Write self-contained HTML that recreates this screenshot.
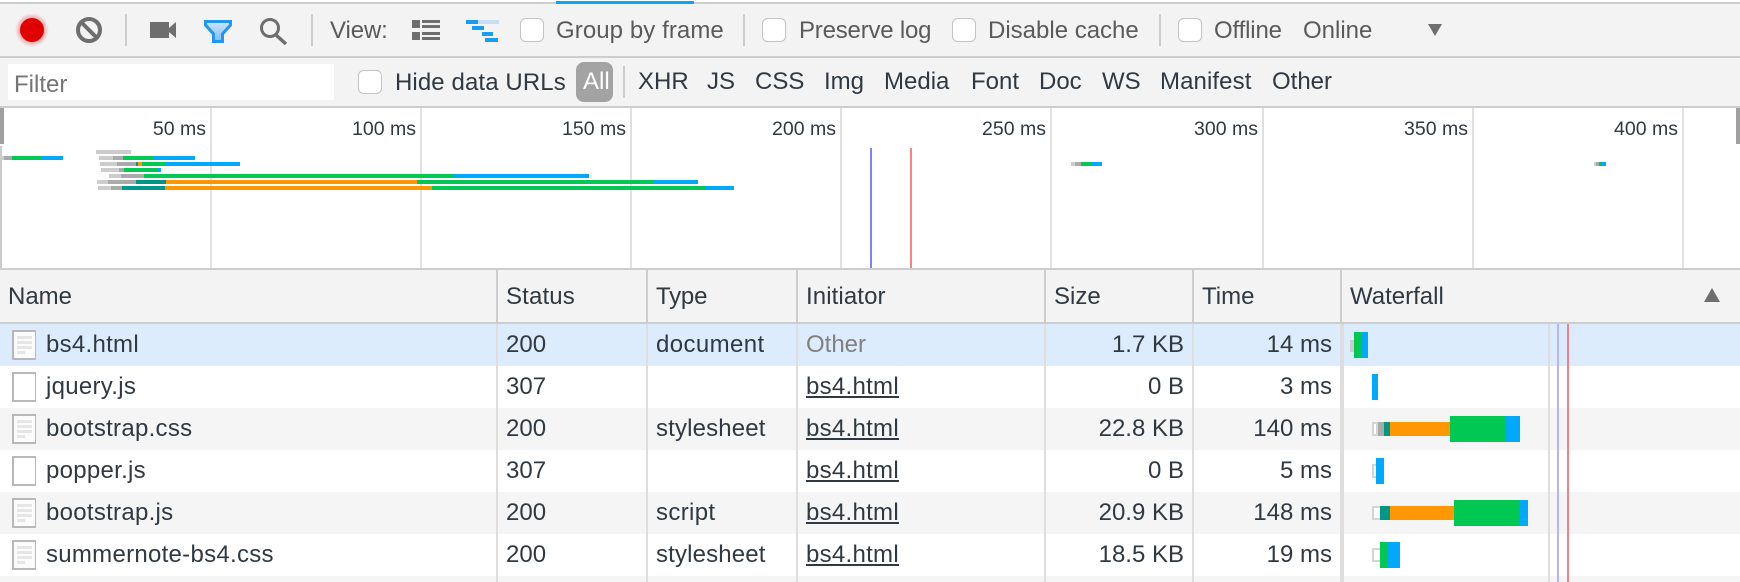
<!DOCTYPE html>
<html><head><meta charset="utf-8"><title>Network</title>
<style>
html,body{margin:0;padding:0;background:#fff}
#p{position:relative;width:1740px;height:582px;overflow:hidden;font:24px "Liberation Sans",sans-serif;color:#303942}
svg{position:absolute;left:0;top:0}
.t{position:absolute;white-space:pre;line-height:30px;height:30px}
.g{color:#5a5a5a}
.o{font-size:19.5px;top:114px;width:100px;text-align:right}
.r{text-align:right;width:120px}
.n{letter-spacing:.28px}
u{text-decoration:underline}
</style></head><body><div id="p">
<svg width="1740" height="582" viewBox="0 0 1740 582" shape-rendering="crispEdges">
<defs><radialGradient id="gl"><stop offset="68%" stop-color="#e00000" stop-opacity=".32"/><stop offset="100%" stop-color="#e00000" stop-opacity="0"/></radialGradient>
<linearGradient id="fg" x1="0" y1="0" x2="0" y2="1"><stop offset="0" stop-color="#cfe4f8"/><stop offset="1" stop-color="#7dbdf6"/></linearGradient></defs>
<!-- chrome backgrounds -->
<rect x="0" y="4" width="1740" height="52" fill="#f3f3f3"/>
<rect x="0" y="2" width="1740" height="2" fill="#cdcdcd"/>
<rect x="556" y="1" width="138" height="3" fill="#03a9f4"/>
<rect x="0" y="56" width="1740" height="2" fill="#cdcdcd"/>
<rect x="0" y="58" width="1740" height="48" fill="#f3f3f3"/>
<rect x="0" y="106" width="1740" height="2" fill="#cdcdcd"/>
<rect x="8" y="64" width="326" height="36" fill="#fff"/>
<!-- separators -->
<rect x="125" y="14" width="2" height="32" fill="#ccc"/>
<rect x="311" y="14" width="2" height="32" fill="#ccc"/>
<rect x="743" y="14" width="2" height="32" fill="#ccc"/>
<rect x="1159" y="14" width="2" height="32" fill="#ccc"/>
<rect x="623" y="66" width="2" height="32" fill="#ccc"/>
<g shape-rendering="auto">
<!-- record -->
<circle cx="32" cy="30" r="17" fill="url(#gl)"/>
<circle cx="32" cy="30" r="12" fill="#e00000"/>
<!-- clear -->
<circle cx="89" cy="30" r="11" fill="none" stroke="#6e6e6e" stroke-width="4"/>
<path d="M81 22L97 38" stroke="#6e6e6e" stroke-width="4" fill="none"/>
<!-- camera -->
<path d="M150 22H169V28L176 22V38L169 32V38H150Z" fill="#6e6e6e"/>
<!-- filter -->
<path d="M205.500 21.500H230.500V25L222.500 34V41.500H213.500V34L205.500 25Z" fill="url(#fg)" stroke="#2196f3" stroke-width="3"/>
<!-- search -->
<circle cx="270" cy="28" r="8.500" fill="none" stroke="#6e6e6e" stroke-width="3"/>
<path d="M276 35L286 44" stroke="#6e6e6e" stroke-width="3.500" fill="none"/>
<!-- checkboxes -->
<rect x="520.500" y="18.500" width="23" height="23" rx="5" fill="#fff" stroke="#c4c4c4"/>
<rect x="762.500" y="18.500" width="23" height="23" rx="5" fill="#fff" stroke="#c4c4c4"/>
<rect x="952.500" y="18.500" width="23" height="23" rx="5" fill="#fff" stroke="#c4c4c4"/>
<rect x="1178.500" y="18.500" width="23" height="23" rx="5" fill="#fff" stroke="#c4c4c4"/>
<rect x="358.500" y="70.500" width="23" height="23" rx="5" fill="#fff" stroke="#c4c4c4"/>
<!-- dropdown triangle -->
<path d="M1428 24H1442L1435 36Z" fill="#6e6e6e"/>
<!-- All pill -->
<rect x="576" y="62" width="37" height="40" rx="8" fill="#a3a3a3"/>
</g>
<!-- list view icon -->
<g fill="#6e6e6e">
<rect x="412" y="20" width="8" height="8"/><rect x="412" y="32" width="8" height="8"/>
<rect x="422" y="20" width="18" height="3"/><rect x="422" y="25" width="18" height="3"/>
<rect x="422" y="32" width="18" height="3"/><rect x="422" y="37" width="18" height="3"/>
</g>
<!-- waterfall view icon -->
<rect x="478" y="20" width="21" height="4" fill="#c9def3"/>
<g fill="#1a9bf5">
<rect x="466" y="20" width="12" height="4"/><rect x="472" y="26" width="12" height="4"/>
<rect x="482" y="32" width="11" height="4"/><rect x="485" y="38" width="13" height="4"/>
</g>
<!-- overview -->
<g fill="#e0e0e0">
<rect x="210" y="108" width="2" height="160"/><rect x="420" y="108" width="2" height="160"/>
<rect x="630" y="108" width="2" height="160"/><rect x="840" y="108" width="2" height="160"/>
<rect x="1050" y="108" width="2" height="160"/><rect x="1262" y="108" width="2" height="160"/>
<rect x="1472" y="108" width="2" height="160"/><rect x="1682" y="108" width="2" height="160"/>
</g>
<rect x="0" y="108" width="4" height="36" fill="#a0a0a0"/>
<rect x="0" y="146" width="2" height="122" fill="#ccc"/>
<rect x="1736" y="108" width="4" height="36" fill="#a0a0a0"/>
<rect x="870" y="148" width="2" height="120" fill="#8080ff"/>
<rect x="910" y="148" width="2" height="120" fill="#ff8080"/>
<!-- overview bars -->
<rect x="96" y="150" width="35" height="4" fill="#ccc"/>
<rect x="2" y="156" width="2" height="4" fill="#ccc"/><rect x="4" y="156" width="8" height="4" fill="#aaa"/><rect x="12" y="156" width="30" height="4" fill="#00c853"/><rect x="42" y="156" width="21" height="4" fill="#00a9fb"/>
<rect x="99" y="156" width="14" height="4" fill="#ccc"/><rect x="113" y="156" width="10" height="4" fill="#aaa"/><rect x="123" y="156" width="31" height="4" fill="#00c853"/><rect x="154" y="156" width="41" height="4" fill="#00a9fb"/>
<rect x="100" y="162" width="17" height="4" fill="#ccc"/><rect x="117" y="162" width="19" height="4" fill="#aaa"/><rect x="136" y="162" width="2" height="4" fill="#009688"/><rect x="138" y="162" width="4" height="4" fill="#ff9800"/><rect x="142" y="162" width="23" height="4" fill="#00c853"/><rect x="165" y="162" width="75" height="4" fill="#00a9fb"/>
<rect x="1071" y="162" width="4" height="4" fill="#ccc"/><rect x="1075" y="162" width="6" height="4" fill="#aaa"/><rect x="1081" y="162" width="10" height="4" fill="#00c853"/><rect x="1091" y="162" width="11" height="4" fill="#00a9fb"/>
<rect x="1594" y="162" width="2" height="4" fill="#ccc"/><rect x="1596" y="162" width="3" height="4" fill="#aaa"/><rect x="1599" y="162" width="3" height="4" fill="#00c853"/><rect x="1602" y="162" width="4" height="4" fill="#00a9fb"/>
<rect x="101" y="168" width="18" height="4" fill="#ccc"/><rect x="119" y="168" width="5" height="4" fill="#aaa"/><rect x="124" y="168" width="33" height="4" fill="#00c853"/><rect x="157" y="168" width="4" height="4" fill="#00a9fb"/>
<rect x="109" y="174" width="12" height="4" fill="#ccc"/><rect x="121" y="174" width="23" height="4" fill="#aaa"/><rect x="144" y="174" width="309" height="4" fill="#00c853"/><rect x="453" y="174" width="136" height="4" fill="#00a9fb"/>
<rect x="97" y="180" width="11" height="4" fill="#ccc"/><rect x="108" y="180" width="28" height="4" fill="#aaa"/><rect x="136" y="180" width="30" height="4" fill="#009688"/><rect x="166" y="180" width="251" height="4" fill="#ff9800"/><rect x="417" y="180" width="236" height="4" fill="#00c853"/><rect x="653" y="180" width="45" height="4" fill="#00a9fb"/>
<rect x="98" y="186" width="13" height="4" fill="#ccc"/><rect x="111" y="186" width="11" height="4" fill="#aaa"/><rect x="122" y="186" width="43" height="4" fill="#009688"/><rect x="165" y="186" width="267" height="4" fill="#ff9800"/><rect x="432" y="186" width="274" height="4" fill="#00c853"/><rect x="706" y="186" width="28" height="4" fill="#00a9fb"/>
<!-- table header -->
<rect x="0" y="268" width="1740" height="2" fill="#cdcdcd"/>
<rect x="0" y="270" width="1740" height="52" fill="#f3f3f3"/>
<rect x="0" y="322" width="1740" height="2" fill="#cdcdcd"/>
<g fill="#cdcdcd">
<rect x="496" y="270" width="2" height="52"/><rect x="646" y="270" width="2" height="52"/><rect x="796" y="270" width="2" height="52"/>
<rect x="1044" y="270" width="2" height="52"/><rect x="1192" y="270" width="2" height="52"/><rect x="1340" y="270" width="2" height="52"/>
</g>
<!-- header sort triangle -->
<path shape-rendering="auto" d="M1704 302L1712 288L1720 302Z" fill="#6e6e6e"/>
<!-- rows -->
<rect x="0" y="324" width="1740" height="42" fill="#dcecfd"/>
<rect x="0" y="408" width="1740" height="42" fill="#f5f5f5"/>
<rect x="0" y="492" width="1740" height="42" fill="#f5f5f5"/>
<rect x="0" y="576" width="1740" height="6" fill="#f5f5f5"/>
<g fill="#dedede">
<rect x="496" y="324" width="2" height="258"/><rect x="646" y="324" width="2" height="258"/><rect x="796" y="324" width="2" height="258"/>
<rect x="1044" y="324" width="2" height="258"/><rect x="1192" y="324" width="2" height="258"/>
<rect x="1340" y="324" width="4" height="258"/><rect x="1548" y="324" width="2" height="258"/>
</g>
<rect x="1557" y="324" width="2" height="258" fill="#b4b4f6"/>
<rect x="1567" y="324" width="2" height="258" fill="#f28088"/>
<!-- waterfall bars -->
<rect x="1350" y="340" width="4" height="12" fill="#ccc"/><rect x="1354" y="332" width="8" height="26" fill="#00c853"/><rect x="1362" y="332" width="6" height="26" fill="#00a9fb"/>
<rect x="1372" y="374" width="6" height="26" fill="#00a9fb"/>
<rect x="1372" y="422" width="6" height="14" fill="#d4d4d4"/><rect x="1374" y="424" width="2" height="10" fill="#fff"/><rect x="1378" y="422" width="6" height="14" fill="#aaa"/><rect x="1384" y="422" width="6" height="14" fill="#009688"/><rect x="1390" y="422" width="60" height="14" fill="#ff9800"/><rect x="1450" y="416" width="56" height="26" fill="#00c853"/><rect x="1506" y="416" width="14" height="26" fill="#00a9fb"/>
<rect x="1372" y="464" width="4" height="14" fill="#d4d4d4"/><rect x="1374" y="466" width="2" height="10" fill="#fff"/><rect x="1376" y="458" width="8" height="26" fill="#00a9fb"/>
<rect x="1372" y="506" width="8" height="14" fill="#d4d4d4"/><rect x="1374" y="508" width="6" height="10" fill="#fff"/><rect x="1380" y="506" width="10" height="14" fill="#009688"/><rect x="1390" y="506" width="64" height="14" fill="#ff9800"/><rect x="1454" y="500" width="66" height="26" fill="#00c853"/><rect x="1520" y="500" width="8" height="26" fill="#00a9fb"/>
<rect x="1372" y="548" width="8" height="14" fill="#d4d4d4"/><rect x="1374" y="550" width="6" height="10" fill="#fff"/><rect x="1380" y="542" width="8" height="26" fill="#00c853"/><rect x="1388" y="542" width="12" height="26" fill="#00a9fb"/>
<!-- file icons -->
<g transform="translate(0,0)"><rect x="12" y="330" width="24" height="30" fill="#b8b8b8"/><rect x="14" y="332" width="21" height="26" fill="#fbfbfb"/><g fill="#e6e6e6"><rect x="17" y="336" width="15" height="3"/><rect x="17" y="341" width="15" height="3"/><rect x="17" y="346" width="15" height="3"/><rect x="17" y="351" width="8" height="3"/></g></g>
<g transform="translate(0,84)"><rect x="12" y="330" width="24" height="30" fill="#b8b8b8"/><rect x="14" y="332" width="21" height="26" fill="#fbfbfb"/><g fill="#e6e6e6"><rect x="17" y="336" width="15" height="3"/><rect x="17" y="341" width="15" height="3"/><rect x="17" y="346" width="15" height="3"/><rect x="17" y="351" width="8" height="3"/></g></g>
<g transform="translate(0,168)"><rect x="12" y="330" width="24" height="30" fill="#b8b8b8"/><rect x="14" y="332" width="21" height="26" fill="#fbfbfb"/><g fill="#e6e6e6"><rect x="17" y="336" width="15" height="3"/><rect x="17" y="341" width="15" height="3"/><rect x="17" y="346" width="15" height="3"/><rect x="17" y="351" width="8" height="3"/></g></g>
<g transform="translate(0,210)"><rect x="12" y="330" width="24" height="30" fill="#b8b8b8"/><rect x="14" y="332" width="21" height="26" fill="#fbfbfb"/><g fill="#e6e6e6"><rect x="17" y="336" width="15" height="3"/><rect x="17" y="341" width="15" height="3"/><rect x="17" y="346" width="15" height="3"/><rect x="17" y="351" width="8" height="3"/></g></g>
<g transform="translate(0,42)"><rect x="12" y="330" width="24" height="30" fill="#b8b8b8"/><rect x="14" y="332" width="21" height="26" fill="#fff"/></g>
<g transform="translate(0,126)"><rect x="12" y="330" width="24" height="30" fill="#b8b8b8"/><rect x="14" y="332" width="21" height="26" fill="#fff"/></g>
</svg>

<span class="t g" style="left:330px;top:16px;letter-spacing:-.1px">View:</span>
<span class="t g" style="left:556px;top:16px;letter-spacing:.08px">Group by frame</span>
<span class="t g" style="left:799px;top:16px;letter-spacing:-.2px">Preserve log</span>
<span class="t g" style="left:988px;top:16px">Disable cache</span>
<span class="t g" style="left:1214px;top:16px;letter-spacing:-.15px">Offline</span>
<span class="t g" style="left:1303px;top:16px">Online</span>

<span class="t" style="left:14px;top:70px;color:#757575">Filter</span>
<span class="t" style="left:395px;top:68px;letter-spacing:.1px">Hide data URLs</span>
<span class="t" style="left:583px;top:67px;color:#fff">All</span>
<span class="t" style="left:638px;top:67px">XHR</span>
<span class="t" style="left:707px;top:67px">JS</span>
<span class="t" style="left:755px;top:67px">CSS</span>
<span class="t" style="left:824px;top:67px">Img</span>
<span class="t" style="left:884px;top:67px">Media</span>
<span class="t" style="left:971px;top:67px">Font</span>
<span class="t" style="left:1039px;top:67px">Doc</span>
<span class="t" style="left:1102px;top:67px">WS</span>
<span class="t" style="left:1160px;top:67px;letter-spacing:.1px">Manifest</span>
<span class="t" style="left:1272px;top:67px">Other</span>

<span class="t o" style="left:106px">50 ms</span>
<span class="t o" style="left:316px">100 ms</span>
<span class="t o" style="left:526px">150 ms</span>
<span class="t o" style="left:736px">200 ms</span>
<span class="t o" style="left:946px">250 ms</span>
<span class="t o" style="left:1158px">300 ms</span>
<span class="t o" style="left:1368px">350 ms</span>
<span class="t o" style="left:1578px">400 ms</span>

<span class="t" style="left:8px;top:282px">Name</span>
<span class="t" style="left:506px;top:282px;letter-spacing:.15px">Status</span>
<span class="t" style="left:656px;top:282px;letter-spacing:-.2px">Type</span>
<span class="t" style="left:806px;top:282px;letter-spacing:.1px">Initiator</span>
<span class="t" style="left:1054px;top:282px">Size</span>
<span class="t" style="left:1202px;top:282px">Time</span>
<span class="t" style="left:1350px;top:282px">Waterfall</span>

<span class="t n" style="left:46px;top:330px">bs4.html</span>
<span class="t" style="left:506px;top:330px">200</span>
<span class="t" style="left:656px;top:330px;letter-spacing:.4px">document</span>
<span class="t" style="left:806px;top:330px;color:#808080">Other</span>
<span class="t r" style="left:1064px;top:330px">1.7 KB</span>
<span class="t r" style="left:1212px;top:330px">14 ms</span>

<span class="t n" style="left:46px;top:372px">jquery.js</span>
<span class="t" style="left:506px;top:372px">307</span>
<span class="t n" style="left:806px;top:372px"><u>bs4.html</u></span>
<span class="t r" style="left:1064px;top:372px">0 B</span>
<span class="t r" style="left:1212px;top:372px">3 ms</span>

<span class="t n" style="left:46px;top:414px">bootstrap.css</span>
<span class="t" style="left:506px;top:414px">200</span>
<span class="t" style="left:656px;top:414px;letter-spacing:.15px">stylesheet</span>
<span class="t n" style="left:806px;top:414px"><u>bs4.html</u></span>
<span class="t r" style="left:1064px;top:414px">22.8 KB</span>
<span class="t r" style="left:1212px;top:414px">140 ms</span>

<span class="t n" style="left:46px;top:456px">popper.js</span>
<span class="t" style="left:506px;top:456px">307</span>
<span class="t n" style="left:806px;top:456px"><u>bs4.html</u></span>
<span class="t r" style="left:1064px;top:456px">0 B</span>
<span class="t r" style="left:1212px;top:456px">5 ms</span>

<span class="t n" style="left:46px;top:498px">bootstrap.js</span>
<span class="t" style="left:506px;top:498px">200</span>
<span class="t" style="left:656px;top:498px;letter-spacing:.35px">script</span>
<span class="t n" style="left:806px;top:498px"><u>bs4.html</u></span>
<span class="t r" style="left:1064px;top:498px">20.9 KB</span>
<span class="t r" style="left:1212px;top:498px">148 ms</span>

<span class="t n" style="left:46px;top:540px">summernote-bs4.css</span>
<span class="t" style="left:506px;top:540px">200</span>
<span class="t" style="left:656px;top:540px;letter-spacing:.15px">stylesheet</span>
<span class="t n" style="left:806px;top:540px"><u>bs4.html</u></span>
<span class="t r" style="left:1064px;top:540px">18.5 KB</span>
<span class="t r" style="left:1212px;top:540px">19 ms</span>
</div></body></html>
